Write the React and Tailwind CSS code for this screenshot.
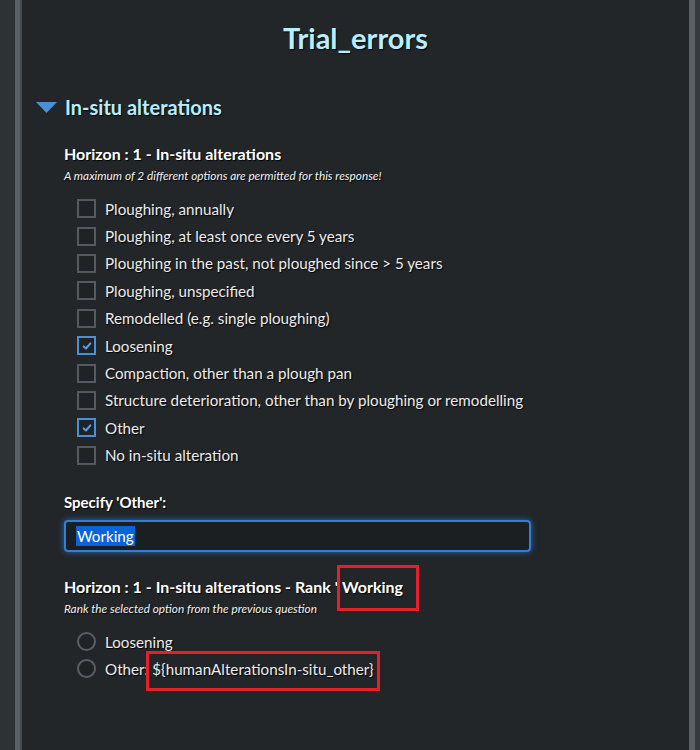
import React from "react";

const alterations = [
  { label: "Ploughing, annually", checked: false },
  { label: "Ploughing, at least once every 5 years", checked: false },
  { label: "Ploughing in the past, not ploughed since > 5 years", checked: false },
  { label: "Ploughing, unspecified", checked: false },
  { label: "Remodelled (e.g. single ploughing)", checked: false },
  { label: "Loosening", checked: true },
  { label: "Compaction, other than a plough pan", checked: false },
  { label: "Structure deterioration, other than by ploughing or remodelling", checked: false },
  { label: "Other", checked: true },
  { label: "No in-situ alteration", checked: false },
];

const shadow = "[text-shadow:1px_1px_1px_rgba(0,0,0,0.9)]";

const Checkbox = ({ checked }) => (
  <span
    className={`flex h-[19px] w-[19px] shrink-0 items-center justify-center border-2 bg-[#1f2326] ${
      checked ? "border-[#4b8fd6]" : "border-[#565a5f]"
    }`}
  >
    {checked ? (
      <svg viewBox="0 0 12 12" className="h-[10px] w-[10px]">
        <path
          d="M2 6.5 L4.8 9 L10 2.8"
          fill="none"
          stroke="#5b9de3"
          strokeWidth="2.4"
          strokeLinecap="round"
          strokeLinejoin="round"
        />
      </svg>
    ) : null}
  </span>
);

const Radio = () => (
  <span className="h-[19px] w-[19px] shrink-0 rounded-full border-2 border-[#5a5e63] bg-[#1f2326]" />
);

const RedMark = ({ className }) => (
  <span className={`pointer-events-none absolute border-[3px] border-[#e5202a] ${className}`} />
);

export default function App() {
  return (
    <div
      className="flex h-[750px] w-full bg-[#2d3235] text-[#ececec]"
      style={{ fontFamily: "Lato, 'Open Sans', sans-serif" }}
    >
      <div className="w-[15px] shrink-0" />
      <div className="flex w-[7px] shrink-0">
        <div className="w-[5px] bg-[#5b6067]" />
        <div className="w-[2px] bg-[#464b51]" />
      </div>

      <main className="flex-1 bg-[#222629] pt-[20px]">
        <h1
          className={`text-center text-[29px] font-bold leading-[36px] text-[#b8efff] ${shadow}`}
        >
          Trial_errors
        </h1>

        <div className="mt-[38px] flex items-center gap-[8px] pl-[14px]">
          <svg viewBox="0 0 21 11" className="h-[11px] w-[21px]">
            <path d="M0 0 H21 L10.5 11 Z" fill="#4a90d9" />
          </svg>
          <h2 className={`text-[20px] font-bold leading-[26px] text-[#b8efff] ${shadow}`}>
            In-situ alterations
          </h2>
        </div>

        <section className="mt-[23px] pl-[42px]">
          <h3 className={`text-[16px] font-bold leading-[22px] text-white ${shadow}`}>
            Horizon : 1 - In-situ alterations
          </h3>
          <p className={`text-[11.8px] italic leading-[22px] text-[#f2f2f2] ${shadow}`}>
            A maximum of 2 different options are permitted for this response!
          </p>

          <ul className="mt-[8px] pl-[13px]">
            {alterations.map((item) => (
              <li key={item.label} className="flex h-[27.4px] items-center gap-[9px]">
                <Checkbox checked={item.checked} />
                <span className={`text-[15.2px] leading-[20px] ${shadow}`}>{item.label}</span>
              </li>
            ))}
          </ul>

          <div className="mt-[22px]">
            <label className={`block text-[15px] font-bold leading-[22px] text-white ${shadow}`}>
              Specify 'Other':
            </label>
            <div className="mt-[7px] flex h-[32px] w-[467px] items-center rounded-[4px] border-2 border-[#2f7fdc] bg-[#1c1f22] px-[10px] shadow-[0_0_6px_rgba(47,127,220,0.7)]">
              <span className="bg-[#0a63d8] px-[1px] text-[15.2px] leading-[20px] text-white">
                Working
              </span>
            </div>
          </div>

          <div className="mt-[24px]">
            <h3 className={`text-[16px] font-bold leading-[22px] text-white ${shadow}`}>
              Horizon : 1 - In-situ alterations - Rank '{" "}
              <span className="relative inline-block">
                Working
                <RedMark className="-bottom-[13px] -left-[5px] -right-[16px] -top-[11px]" />
              </span>
            </h3>
            <p className={`text-[11.8px] italic leading-[22px] text-[#f2f2f2] ${shadow}`}>
              Rank the selected option from the previous question
            </p>

            <ul className="mt-[8px] pl-[13px]">
              <li className="flex h-[27.4px] items-center gap-[9px]">
                <Radio />
                <span className={`text-[15.2px] leading-[20px] ${shadow}`}>Loosening</span>
              </li>
              <li className="flex h-[27.4px] items-center gap-[9px]">
                <Radio />
                <span className={`text-[15.2px] leading-[20px] ${shadow}`}>
                  Other:{" "}
                  <span className="relative inline-block">
                    {"${humanAlterationsIn-situ_other}"}
                    <RedMark className="-bottom-[12px] -left-[6px] -right-[6px] -top-[8px]" />
                  </span>
                </span>
              </li>
            </ul>
          </div>
        </section>
      </main>

      <div className="w-[6px] shrink-0 bg-[#5b6067]" />
      <div className="w-[5px] shrink-0 bg-[#353a3e]" />
    </div>
  );
}
